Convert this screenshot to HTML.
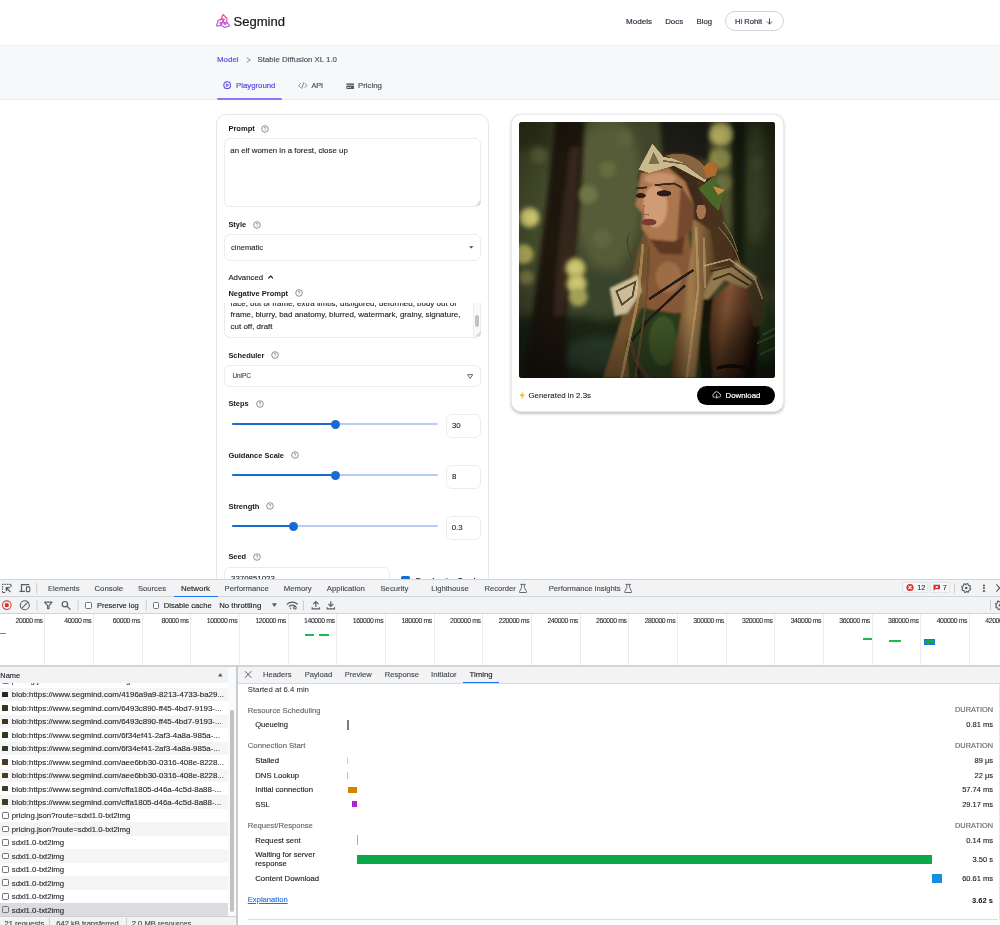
<!DOCTYPE html>
<html lang="en">
<head>
<meta charset="utf-8">
<title>Stable Diffusion XL 1.0 - Segmind</title>
<style>
*{box-sizing:border-box;margin:0;padding:0}
html,body{width:1000px;height:925px;overflow:hidden;background:#fff}
body{font-family:"Liberation Sans",sans-serif;color:#111;position:relative}
.abs{position:absolute}
.t{position:absolute;white-space:nowrap;line-height:1}
.box{position:absolute;border:1px solid #ececef;border-radius:6px;background:#fff}
#site{will-change:transform;position:absolute;left:0;top:0;width:1000px;height:579px;overflow:hidden;background:#fff}
#dt{will-change:transform;position:absolute;left:0;top:0;width:1000px;height:925px;overflow:hidden}

</style>
</head>
<body>
<div id="site">
<div class="abs" style="left:0.00px;top:45.00px;width:1000.00px;height:1.00px;background:#eceef1;"></div>
<div class="abs" style="left:0.00px;top:46.00px;width:1000.00px;height:53.50px;background:#f7f8fa;"></div>
<div class="abs" style="left:0.00px;top:99.00px;width:1000.00px;height:1.00px;background:#e9ebef;"></div>
<svg class="abs" style="left:216.3px;top:14px" width="14.2" height="13.8" viewBox="-333 -381 666 645" preserveAspectRatio="none">
<defs><linearGradient id="lg" gradientUnits="userSpaceOnUse" x1="20" y1="-360" x2="-40" y2="230"><stop offset="0" stop-color="#ff5273"/><stop offset="0.5" stop-color="#d656bd"/><stop offset="1" stop-color="#a467f2"/></linearGradient></defs>
<g fill="none" stroke="url(#lg)" stroke-width="58" stroke-linejoin="round" stroke-linecap="round">
<path d="M0 -358L180 -170L170 -40L90 62L0 -40L55 -140L-85 -168Z"/>
<path d="M310 179L57 241L-50 167L-99 47L35 20L94 118L188 10Z"/>
<path d="M-310 179L-237 -71L-120 -127L9 -109L-35 20L-149 22L-103 158Z"/>
</g></svg>
<span class="t" style="top:15.00px;font-size:13.05px;color:#15171c;left:233.50px;-webkit-text-stroke:0.2px #15171c;">Segmind</span>
<span class="t" style="top:18.00px;font-size:8.05px;color:#2a3140;left:626.00px;-webkit-text-stroke:0.18px #2a3140;">Models</span>
<span class="t" style="top:18.00px;font-size:7.85px;color:#2a3140;left:665.20px;-webkit-text-stroke:0.18px #2a3140;">Docs</span>
<span class="t" style="top:18.00px;font-size:7.75px;color:#2a3140;left:696.60px;-webkit-text-stroke:0.18px #2a3140;">Blog</span>
<div class="abs" style="left:725px;top:11.2px;width:58.6px;height:20px;border:0.8px solid #cfd3da;border-radius:10px;background:#fff"></div>
<span class="t" style="top:18.00px;font-size:7.6px;color:#2a3140;left:735.00px;-webkit-text-stroke:0.18px #2a3140;">Hi Rohit</span>
<svg class="abs" style="left:765.5px;top:17.5px" width="7" height="7" viewBox="0 0 14 14"><path d="M7 1.5V12M2.5 7.5L7 12l4.5-4.5" fill="none" stroke="#2a3140" stroke-width="1.7" stroke-linecap="round" stroke-linejoin="round"/></svg>
<span class="t" style="top:56.00px;font-size:7.95px;color:#5a4ee6;left:217.00px;-webkit-text-stroke:0.18px #5a4ee6;">Model</span>
<svg class="abs" style="left:246px;top:56.5px" width="5" height="6" viewBox="0 0 5 6"><path d="M0.7 0.7L4.2 3L0.7 5.3" fill="none" stroke="#6b7280" stroke-width="0.8"/></svg>
<span class="t" style="top:56.00px;font-size:7.85px;color:#454b58;left:257.60px;-webkit-text-stroke:0.12px #454b58;">Stable Diffusion XL 1.0</span>
<svg class="abs" style="left:222.8px;top:81.2px" width="8.4" height="8.4" viewBox="0 0 16 16"><circle cx="8" cy="8" r="6.4" fill="none" stroke="#5a4ee6" stroke-width="2"/><path d="M6.4 5.2L11 8L6.4 10.8Z" fill="none" stroke="#5a4ee6" stroke-width="1.7" stroke-linejoin="round"/></svg>
<span class="t" style="top:82.00px;font-size:7.8px;color:#5a4ee6;left:236.00px;-webkit-text-stroke:0.2px #5a4ee6;">Playground</span>
<svg class="abs" style="left:298px;top:82px" width="9.6" height="7" viewBox="0 0 19 14"><path d="M5 3L1.3 7L5 11M14 3l3.7 4L14 11M11.3 1.2L7.7 12.8" fill="none" stroke="#555b66" stroke-width="1.4" stroke-linecap="round" stroke-linejoin="round"/></svg>
<span class="t" style="top:82.00px;font-size:7.3px;color:#4a505c;left:311.40px;-webkit-text-stroke:0.18px #4a505c;">API</span>
<svg class="abs" style="left:345.5px;top:82.5px" width="8.6" height="6.4" viewBox="0 0 17 13"><rect x="0.5" y="0.8" width="16" height="3" fill="#555b66"/><rect x="0.5" y="5.2" width="16" height="7" rx="1" fill="#555b66"/><rect x="2.5" y="8.6" width="4" height="1.6" fill="#fff"/><rect x="8" y="8.6" width="2" height="1.6" fill="#fff"/></svg>
<span class="t" style="top:82.00px;font-size:7.85px;color:#4a505c;left:358.00px;-webkit-text-stroke:0.18px #4a505c;">Pricing</span>
<div class="abs" style="left:216.60px;top:97.50px;width:65.00px;height:2.20px;background:#847bf3;border-radius:1px"></div>
<div class="abs" style="left:216.3px;top:114px;width:273px;height:520px;border:1px solid #e6e7ea;border-radius:10px;background:#fff"></div>
<span class="t" style="top:125.00px;font-size:7.55px;color:#15171b;left:228.40px;font-weight:bold;">Prompt</span>
<svg class="abs" style="left:260.70px;top:124.80px" width="8" height="8" viewBox="0 0 8 8"><circle cx="4" cy="4" r="3.3" fill="none" stroke="#696d75" stroke-width="0.75"/><text x="4" y="5.7" font-size="4.6" text-anchor="middle" fill="#696d75" font-family="Liberation Sans, sans-serif">?</text></svg>
<div class="box" style="left:224.3px;top:138.4px;width:257px;height:68.4px"></div>
<span class="t" style="top:147.00px;font-size:7.9px;color:#1d1f24;left:230.25px;-webkit-text-stroke:0.12px #1d1f24;">an elf women in a forest, close up</span>
<svg class="abs" style="left:474.5px;top:200.3px" width="6" height="6" viewBox="0 0 6 6"><path d="M5.5 1L1 5.5M5.5 3.5L3.5 5.5" stroke="#8a8d93" stroke-width="0.6" fill="none"/></svg>
<span class="t" style="top:221.00px;font-size:7.4px;color:#15171b;left:228.40px;font-weight:bold;">Style</span>
<svg class="abs" style="left:252.50px;top:220.60px" width="8" height="8" viewBox="0 0 8 8"><circle cx="4" cy="4" r="3.3" fill="none" stroke="#696d75" stroke-width="0.75"/><text x="4" y="5.7" font-size="4.6" text-anchor="middle" fill="#696d75" font-family="Liberation Sans, sans-serif">?</text></svg>
<div class="box" style="left:224.3px;top:234.2px;width:257px;height:26.4px"></div>
<span class="t" style="top:244.00px;font-size:7.6px;color:#26282d;left:231.00px;-webkit-text-stroke:0.12px #26282d;">cinematic</span>
<svg class="abs" style="left:469px;top:246.2px" width="4.6" height="2.8" viewBox="0 0 46 28"><path d="M2 2H44L23 26Z" fill="#3c3f45"/></svg>
<span class="t" style="top:274.00px;font-size:7.8px;color:#1d1f24;left:228.40px;-webkit-text-stroke:0.12px #1d1f24;">Advanced</span>
<svg class="abs" style="left:267.6px;top:275px" width="5.4" height="4" viewBox="0 0 54 40"><path d="M6 32L27 10L48 32" fill="none" stroke="#1d1f24" stroke-width="11" stroke-linecap="round" stroke-linejoin="round"/></svg>
<span class="t" style="top:290.00px;font-size:7.5px;color:#15171b;left:228.40px;font-weight:bold;">Negative Prompt</span>
<svg class="abs" style="left:295.00px;top:288.60px" width="8" height="8" viewBox="0 0 8 8"><circle cx="4" cy="4" r="3.3" fill="none" stroke="#696d75" stroke-width="0.75"/><text x="4" y="5.7" font-size="4.6" text-anchor="middle" fill="#696d75" font-family="Liberation Sans, sans-serif">?</text></svg>
<div class="abs" style="left:224.3px;top:303px;width:257px;height:34.6px;overflow:hidden;border:1px solid #e9eaed;border-top:none;border-radius:0 0 6px 6px;background:#fff">
<div class="abs" style="left:247.3px;top:0;width:8.7px;height:34px;background:#fafafa;border-left:0.6px solid #ececec"></div>
<div class="abs" style="left:249.3px;top:11.8px;width:4.4px;height:12.4px;background:#c2c2c2;border-radius:2.2px"></div>
</div>
<div class="abs" style="left:224.3px;top:303px;width:248px;height:34px;overflow:hidden">
<span class="t" style="left:6.3px;top:-3.00px;font-size:7.98px;color:#1d1f24;-webkit-text-stroke:0.12px #1d1f24">face, out of frame, extra limbs, disfigured, deformed, body out of</span>
<span class="t" style="left:6.3px;top:8.00px;font-size:7.98px;color:#1d1f24;-webkit-text-stroke:0.12px #1d1f24">frame, blurry, bad anatomy, blurred, watermark, grainy, signature,</span>
<span class="t" style="left:6.3px;top:20.00px;font-size:7.98px;color:#1d1f24;-webkit-text-stroke:0.12px #1d1f24">cut off, draft</span>
</div>
<svg class="abs" style="left:474.5px;top:331.2px" width="6" height="6" viewBox="0 0 6 6"><path d="M5.5 1L1 5.5M5.5 3.5L3.5 5.5" stroke="#8a8d93" stroke-width="0.6" fill="none"/></svg>
<span class="t" style="top:352.00px;font-size:7.45px;color:#15171b;left:228.40px;font-weight:bold;">Scheduler</span>
<svg class="abs" style="left:271.00px;top:351.20px" width="8" height="8" viewBox="0 0 8 8"><circle cx="4" cy="4" r="3.3" fill="none" stroke="#696d75" stroke-width="0.75"/><text x="4" y="5.7" font-size="4.6" text-anchor="middle" fill="#696d75" font-family="Liberation Sans, sans-serif">?</text></svg>
<div class="box" style="left:224.3px;top:365.3px;width:257px;height:21.4px"></div>
<span class="t" style="top:373.00px;font-size:6.45px;color:#3c4660;left:232.40px;-webkit-text-stroke:0.12px #3c4660;">UniPC</span>
<svg class="abs" style="left:467px;top:373.6px" width="6.4" height="5" viewBox="0 0 64 50"><path d="M6 6H58L32 44Z" fill="none" stroke="#3c4660" stroke-width="8" stroke-linejoin="round"/></svg>
<span class="t" style="top:400.00px;font-size:7.45px;color:#15171b;left:228.40px;font-weight:bold;">Steps</span>
<svg class="abs" style="left:255.50px;top:400.30px" width="8" height="8" viewBox="0 0 8 8"><circle cx="4" cy="4" r="3.3" fill="none" stroke="#696d75" stroke-width="0.75"/><text x="4" y="5.7" font-size="4.6" text-anchor="middle" fill="#696d75" font-family="Liberation Sans, sans-serif">?</text></svg>
<div class="abs" style="left:232.00px;top:423.40px;width:206.00px;height:2.00px;background:#b5cff2;border-radius:1px"></div>
<div class="abs" style="left:232.00px;top:423.40px;width:103.40px;height:2.00px;background:#1a6ad4;border-radius:1px"></div>
<div class="abs" style="left:330.70px;top:419.70px;width:9.4px;height:9.4px;border-radius:50%;background:#1a6ad4"></div>
<div class="box" style="left:445.6px;top:414.20px;width:35.6px;height:23.4px;border-radius:6px"></div>
<span class="t" style="top:422.00px;font-size:7.75px;color:#1d1f24;left:452.00px;-webkit-text-stroke:0.12px #1d1f24;">30</span>
<span class="t" style="top:452.00px;font-size:7.47px;color:#15171b;left:228.40px;font-weight:bold;">Guidance Scale</span>
<svg class="abs" style="left:290.50px;top:451.30px" width="8" height="8" viewBox="0 0 8 8"><circle cx="4" cy="4" r="3.3" fill="none" stroke="#696d75" stroke-width="0.75"/><text x="4" y="5.7" font-size="4.6" text-anchor="middle" fill="#696d75" font-family="Liberation Sans, sans-serif">?</text></svg>
<div class="abs" style="left:232.00px;top:474.40px;width:206.00px;height:2.00px;background:#b5cff2;border-radius:1px"></div>
<div class="abs" style="left:232.00px;top:474.40px;width:103.40px;height:2.00px;background:#1a6ad4;border-radius:1px"></div>
<div class="abs" style="left:330.70px;top:470.70px;width:9.4px;height:9.4px;border-radius:50%;background:#1a6ad4"></div>
<div class="box" style="left:445.6px;top:465.20px;width:35.6px;height:23.4px;border-radius:6px"></div>
<span class="t" style="top:473.00px;font-size:7.75px;color:#1d1f24;left:452.00px;-webkit-text-stroke:0.12px #1d1f24;">8</span>
<span class="t" style="top:503.00px;font-size:7.54px;color:#15171b;left:228.40px;font-weight:bold;">Strength</span>
<svg class="abs" style="left:266.00px;top:502.30px" width="8" height="8" viewBox="0 0 8 8"><circle cx="4" cy="4" r="3.3" fill="none" stroke="#696d75" stroke-width="0.75"/><text x="4" y="5.7" font-size="4.6" text-anchor="middle" fill="#696d75" font-family="Liberation Sans, sans-serif">?</text></svg>
<div class="abs" style="left:232.00px;top:525.40px;width:206.00px;height:2.00px;background:#b5cff2;border-radius:1px"></div>
<div class="abs" style="left:232.00px;top:525.40px;width:61.60px;height:2.00px;background:#1a6ad4;border-radius:1px"></div>
<div class="abs" style="left:288.90px;top:521.70px;width:9.4px;height:9.4px;border-radius:50%;background:#1a6ad4"></div>
<div class="box" style="left:445.6px;top:516.20px;width:35.6px;height:23.4px;border-radius:6px"></div>
<span class="t" style="top:524.00px;font-size:7.75px;color:#1d1f24;left:451.70px;-webkit-text-stroke:0.12px #1d1f24;">0.3</span>
<span class="t" style="top:553.00px;font-size:7.4px;color:#15171b;left:228.40px;font-weight:bold;">Seed</span>
<svg class="abs" style="left:252.50px;top:553.30px" width="8" height="8" viewBox="0 0 8 8"><circle cx="4" cy="4" r="3.3" fill="none" stroke="#696d75" stroke-width="0.75"/><text x="4" y="5.7" font-size="4.6" text-anchor="middle" fill="#696d75" font-family="Liberation Sans, sans-serif">?</text></svg>
<div class="box" style="left:224.3px;top:567.2px;width:165.3px;height:26px"></div>
<span class="t" style="top:575.00px;font-size:7.9px;color:#1d1f24;left:231.00px;-webkit-text-stroke:0.12px #1d1f24;">3370851023</span>
<div class="abs" style="left:401.4px;top:576px;width:8.6px;height:8.6px;border-radius:1.5px;background:#1a6ad4"></div>
<span class="t" style="top:577.00px;font-size:7.5px;color:#15171b;left:415.70px;font-weight:bold;">Randomize Seed</span>
<div class="abs" style="left:511px;top:114.3px;width:272.5px;height:297.5px;border:1px solid #ececef;border-radius:10px;background:#fff;box-shadow:0 1.5px 3px rgba(0,0,0,0.22),0 0 1px rgba(0,0,0,0.1)"></div>
<svg class="abs" style="left:519px;top:122px;border-radius:3px" width="256" height="256" viewBox="0 0 925 925">
<defs>
<filter id="b1" x="-20%" y="-20%" width="140%" height="140%"><feGaussianBlur stdDeviation="18"/></filter>
<filter id="b2" x="-20%" y="-20%" width="140%" height="140%"><feGaussianBlur stdDeviation="7"/></filter>
<filter id="b3" x="-20%" y="-20%" width="140%" height="140%"><feGaussianBlur stdDeviation="3.5"/></filter>
<filter id="b4" x="-20%" y="-20%" width="140%" height="140%"><feGaussianBlur stdDeviation="2.2"/></filter>
<radialGradient id="vig" cx="0.45" cy="0.42" r="0.78"><stop offset="0.5" stop-color="#000" stop-opacity="0"/><stop offset="1" stop-color="#000" stop-opacity="0.6"/></radialGradient>
<radialGradient id="bk" cx="0.5" cy="0.5" r="0.5"><stop offset="0" stop-color="#d6cf78"/><stop offset="0.7" stop-color="#c2bb68"/><stop offset="1" stop-color="#8f8c4a"/></radialGradient>
<linearGradient id="hairR" x1="0" y1="0" x2="1" y2="0"><stop offset="0" stop-color="#4a321c"/><stop offset="0.45" stop-color="#a27c4c"/><stop offset="1" stop-color="#553a22"/></linearGradient>
<linearGradient id="arm" x1="0" y1="0" x2="1" y2="0.3"><stop offset="0" stop-color="#452814"/><stop offset="0.4" stop-color="#8c5b38"/><stop offset="0.8" stop-color="#5a3620"/><stop offset="1" stop-color="#28160b"/></linearGradient>
<linearGradient id="armv" x1="0" y1="0" x2="0" y2="1"><stop offset="0.3" stop-color="#000" stop-opacity="0"/><stop offset="1" stop-color="#000" stop-opacity="0.45"/></linearGradient>
</defs>
<rect width="925" height="925" fill="#41462b"/>
<g filter="url(#b1)">
<ellipse cx="320" cy="250" rx="125" ry="290" fill="#575c39"/>
<ellipse cx="50" cy="300" rx="70" ry="320" fill="#42482c"/>
<ellipse cx="725" cy="200" rx="60" ry="240" fill="#50552f"/>
<rect x="780" y="-40" width="180" height="640" fill="#2b321d"/>
<ellipse cx="858" cy="220" rx="36" ry="220" fill="#41482c"/>
<rect x="-40" y="700" width="1000" height="280" fill="#1b2819"/>
<ellipse cx="300" cy="620" rx="110" ry="90" fill="#38452b"/>
<ellipse cx="290" cy="840" rx="130" ry="60" fill="#2a3e2a"/>
<ellipse cx="890" cy="760" rx="45" ry="110" fill="#26401f"/>
<rect x="-30" y="-30" width="150" height="130" fill="#30371f"/>
<ellipse cx="720" cy="470" rx="60" ry="90" fill="#2a3320"/>
</g>
<g filter="url(#b2)">
<path d="M132 -10H236L224 250L198 520L172 700L168 935H24L56 640L100 300Z" fill="#1c1710"/>
<path d="M184 90L220 90L198 480L162 700L124 700L146 420Z" fill="#35261a"/>
<path d="M508 -10H692L686 140L520 124Z" fill="#1d1b13"/>
<path d="M768 -10H816L812 540H776Z" fill="#151a10"/>
</g>
<g filter="url(#b2)">
<circle cx="730" cy="44" r="44" fill="url(#bk)"/>
<circle cx="726" cy="132" r="38" fill="#8f8d4b"/>
<circle cx="738" cy="220" r="30" fill="#6a6d3f"/>
<circle cx="38" cy="345" r="38" fill="url(#bk)"/>
<circle cx="16" cy="478" r="36" fill="#a8a455"/>
<circle cx="26" cy="562" r="26" fill="#74763f"/>
<circle cx="204" cy="528" r="38" fill="url(#bk)"/>
<circle cx="208" cy="585" r="38" fill="url(#bk)"/>
<circle cx="214" cy="632" r="34" fill="#a5a058"/>
<circle cx="250" cy="262" r="34" fill="#6f7445"/>
<circle cx="320" cy="170" r="30" fill="#666c41"/>
<circle cx="300" cy="420" r="34" fill="#5f663d"/>
<circle cx="70" cy="120" r="30" fill="#575d38"/>
<circle cx="380" cy="60" r="30" fill="#5c623b"/>
<circle cx="860" cy="150" r="24" fill="#4a5132"/>
<circle cx="880" cy="330" r="22" fill="#3c452a"/>
</g>
<g filter="url(#b3)">
<!-- back hair -->
<path d="M428 205C440 140 520 100 600 112C680 128 722 220 732 330C742 420 800 470 800 520L720 540L690 700L660 925H545L560 700L600 520L640 380Z" fill="#3e2a18"/>
<path d="M302 925C350 780 400 620 428 470L450 400L490 430L480 560L450 700L420 925Z" fill="#73522e"/>
<!-- armor left -->
<path d="M328 600L430 552L442 612L392 690L346 702Z" fill="#cabd97"/>
<!-- neck & chest -->
<path d="M468 415L610 395L640 560L650 690L470 690L440 600L476 540Z" fill="#865838"/>
<path d="M470 420L600 400L590 480L510 476Z" fill="#5e3822"/>
<ellipse cx="540" cy="560" rx="46" ry="56" fill="#a8764e" opacity="0.7"/>
<!-- face -->
<path d="M440 185L540 165L600 215L632 300L628 390L560 432L472 424L442 384L447 332L420 302L432 240Z" fill="#ac7650"/>
<ellipse cx="492" cy="305" rx="44" ry="76" fill="#d9a67e" opacity="0.8"/>
<ellipse cx="510" cy="205" rx="56" ry="22" fill="#cf9d75" opacity="0.75"/>
<path d="M585 230L632 300L628 392L570 425Z" fill="#6e442a" opacity="0.9"/>
<!-- dress -->
<path d="M440 672L560 690L690 688L712 925H398L388 800Z" fill="#2a3a1a"/>
<ellipse cx="520" cy="790" rx="50" ry="90" fill="#3b5125"/>
<path d="M640 700L700 690L712 925H660Z" fill="#161e10"/>
<!-- right armor + arm -->
<path d="M700 640L770 575L848 615L868 760L852 925H700L688 770Z" fill="url(#arm)"/>
<path d="M700 640L770 575L848 615L868 760L852 925H700L688 770Z" fill="url(#armv)"/>
<path d="M655 505L760 480L862 560L892 640L882 730L850 740L822 602L742 572L684 640L640 712L648 560Z" fill="#93794f"/>
<path d="M822 602L862 560L892 640L882 730L850 740Z" fill="#4a3a24"/>
<path d="M640 640L700 640L690 720L650 720Z" fill="#17120d"/>
<path d="M640 210C700 230 740 300 745 380C760 440 790 480 780 520L700 530L650 400Z" fill="#4a331e"/>
<!-- front hair right -->
<path d="M630 350L690 390L712 520L668 620L638 925H545L596 640L622 470Z" fill="url(#hairR)"/>
</g>
<g filter="url(#b4)">
<ellipse cx="658" cy="322" rx="17" ry="30" fill="#a87350"/>
<!-- tiara -->
<path d="M432 172L482 78L522 126L602 140L684 192L672 218L560 158L470 184Z" fill="#c9b98d"/>
<path d="M468 152L486 108L508 150Z" fill="#5c4c30" opacity="0.7"/>
<path d="M520 140L600 152L672 205" stroke="#5c4a2c" stroke-width="6" fill="none" opacity="0.8"/>
<!-- hair top -->
<path d="M530 122C600 100 660 130 692 190L676 208L600 150Z" fill="#86653f"/>
<path d="M560 170L640 210L668 300L640 300L610 220Z" fill="#3d2a1a"/>
<!-- flower / leaves -->
<path d="M664 165L690 142L718 150L712 192L680 204Z" fill="#b06c2e"/>
<path d="M648 240L700 200L742 250L722 322L690 290Z" fill="#48682a"/>
<path d="M700 232L745 245L720 264Z" fill="#c88a40"/>
<!-- eyes brows lips -->
<ellipse cx="440" cy="266" rx="18" ry="9" fill="#2b1d15"/>
<ellipse cx="524" cy="258" rx="26" ry="11" fill="#2b1d15"/>
<path d="M424 240L462 236M490 228L560 222L590 238" stroke="#3a281a" stroke-width="7" fill="none"/>
<ellipse cx="470" cy="362" rx="27" ry="12" fill="#7c3b31"/>
<path d="M452 300L446 332L470 336" stroke="#8a5a3c" stroke-width="5" fill="none" opacity="0.7"/>
<!-- straps -->
<path d="M630 535L470 640M600 590L440 740M480 700L400 800L440 925" stroke="#231a12" stroke-width="9" fill="none"/>
<path d="M400 790L420 860L470 925" stroke="#4a3826" stroke-width="14" fill="none"/>
<!-- armor patterns -->
<path d="M352 612L420 578L410 630L372 660Z" fill="none" stroke="#5a4a30" stroke-width="7"/>
<path d="M690 540L770 520L850 580M700 570L760 548L830 590" stroke="#3f301d" stroke-width="7" fill="none"/>
<path d="M668 520L760 496L850 560L880 640" stroke="#cdb98a" stroke-width="6" fill="none" opacity="0.7"/>
<!-- hair strands -->
<path d="M640 380L648 600L606 925M668 420L672 600" stroke="#c9a672" stroke-width="9" fill="none" opacity="0.55"/>
<path d="M448 440L430 640L370 925" stroke="#b8945e" stroke-width="10" fill="none" opacity="0.7"/>
<path d="M470 450L460 640L420 925" stroke="#6a4a2a" stroke-width="8" fill="none" opacity="0.7"/>
<path d="M720 380C760 420 790 470 800 520M735 360C770 400 780 440 790 470" stroke="#94744c" stroke-width="4" fill="none" opacity="0.8"/>
<path d="M400 400C380 430 400 470 410 500" stroke="#4a3520" stroke-width="3" fill="none"/>
<!-- arm band -->
<path d="M715 890C760 874 820 880 855 912" stroke="#130f0b" stroke-width="12" fill="none"/>
<!-- fern right -->
<path d="M860 800L925 770M870 840L925 815M880 770L925 745" stroke="#456b34" stroke-width="7" fill="none"/>
</g>
<rect width="925" height="925" fill="url(#vig)"/>
</svg>
<svg class="abs" style="left:519.3px;top:390.5px" width="6.5" height="9" viewBox="0 0 13 18"><path d="M8.5 0.5L1 10h4.6L4 17.5L12 7.2H7.2Z" fill="#f5b73a"/></svg>
<span class="t" style="top:392.00px;font-size:7.86px;color:#1d1f24;left:528.50px;-webkit-text-stroke:0.12px #1d1f24;">Generated in 2.3s</span>
<div class="abs" style="left:697px;top:386px;width:78.4px;height:19.2px;border-radius:9.6px;background:#000"></div>
<svg class="abs" style="left:712.2px;top:391.3px" width="9.4" height="8" viewBox="0 0 19 16"><path d="M5 12.5H4.3A3.4 3.4 0 0 1 4 5.8A5.3 5.3 0 0 1 14.3 5A3.8 3.8 0 0 1 14.6 12.5H14" fill="none" stroke="#fff" stroke-width="1.5" stroke-linecap="round"/><path d="M9.5 7.5V14M7 11.8L9.5 14.3L12 11.8" fill="none" stroke="#fff" stroke-width="1.5" stroke-linecap="round" stroke-linejoin="round"/></svg>
<span class="t" style="top:392.00px;font-size:7.82px;color:#fff;left:725.60px;-webkit-text-stroke:0.2px #fff;">Download</span>
</div>
<div id="dt">
<div class="abs" style="left:0.00px;top:579.00px;width:1000.00px;height:346.00px;background:#fff;"></div>
<div class="abs" style="left:0.00px;top:579.00px;width:1000.00px;height:1.00px;background:#d2d4d8;"></div>
<div class="abs" style="left:0.00px;top:580.00px;width:1000.00px;height:16.00px;background:#f1f3f4;"></div>
<div class="abs" style="left:0.00px;top:596.00px;width:1000.00px;height:1.00px;background:#d2d4d8;"></div>
<div class="abs" style="left:0.00px;top:597.00px;width:1000.00px;height:16.00px;background:#f1f3f4;"></div>
<div class="abs" style="left:0.00px;top:613.00px;width:1000.00px;height:1.00px;background:#d2d4d8;"></div>
<span class="t" style="top:585.00px;font-size:7.56px;color:#45484e;left:48.00px;-webkit-text-stroke:0.12px #45484e;">Elements</span>
<span class="t" style="top:585.00px;font-size:7.77px;color:#45484e;left:94.50px;-webkit-text-stroke:0.12px #45484e;">Console</span>
<span class="t" style="top:585.00px;font-size:7.63px;color:#45484e;left:138.00px;-webkit-text-stroke:0.12px #45484e;">Sources</span>
<span class="t" style="top:585.00px;font-size:7.91px;color:#202124;left:181.00px;-webkit-text-stroke:0.12px #202124;">Network</span>
<span class="t" style="top:585.00px;font-size:7.73px;color:#45484e;left:224.50px;-webkit-text-stroke:0.12px #45484e;">Performance</span>
<span class="t" style="top:585.00px;font-size:7.75px;color:#45484e;left:283.75px;-webkit-text-stroke:0.12px #45484e;">Memory</span>
<span class="t" style="top:585.00px;font-size:7.82px;color:#45484e;left:326.75px;-webkit-text-stroke:0.12px #45484e;">Application</span>
<span class="t" style="top:585.00px;font-size:7.68px;color:#45484e;left:380.50px;-webkit-text-stroke:0.12px #45484e;">Security</span>
<span class="t" style="top:585.00px;font-size:7.66px;color:#45484e;left:431.25px;-webkit-text-stroke:0.12px #45484e;">Lighthouse</span>
<span class="t" style="top:585.00px;font-size:7.6px;color:#45484e;left:484.50px;-webkit-text-stroke:0.12px #45484e;">Recorder</span>
<span class="t" style="top:585.00px;font-size:7.67px;color:#45484e;left:548.75px;-webkit-text-stroke:0.12px #45484e;">Performance insights</span>
<div class="abs" style="left:174.00px;top:595.50px;width:43.50px;height:1.50px;background:#1a73e8;"></div>
<div class="abs" style="left:85.2px;top:602.2px;width:6.6px;height:6.6px;border:0.8px solid #6f7378;border-radius:1.4px;background:#fff"></div>
<span class="t" style="top:602.00px;font-size:7.44px;color:#202124;left:97.00px;-webkit-text-stroke:0.12px #202124;">Preserve log</span>
<div class="abs" style="left:152.6px;top:602.2px;width:6.6px;height:6.6px;border:0.8px solid #6f7378;border-radius:1.4px;background:#fff"></div>
<span class="t" style="top:602.00px;font-size:7.64px;color:#202124;left:163.75px;-webkit-text-stroke:0.12px #202124;">Disable cache</span>
<span class="t" style="top:602.00px;font-size:7.79px;color:#202124;left:219.25px;-webkit-text-stroke:0.12px #202124;">No throttling</span>
<div class="abs" style="left:44.00px;top:614.00px;width:1.00px;height:51.00px;background:#eaecee;"></div>
<span class="t" style="top:618.00px;font-size:6.9px;color:#303236;right:957.40px;-webkit-text-stroke:0.12px #303236;letter-spacing:-0.4px;">20000 ms</span>
<div class="abs" style="left:93.00px;top:614.00px;width:1.00px;height:51.00px;background:#eaecee;"></div>
<span class="t" style="top:618.00px;font-size:6.9px;color:#303236;right:908.74px;-webkit-text-stroke:0.12px #303236;letter-spacing:-0.4px;">40000 ms</span>
<div class="abs" style="left:142.00px;top:614.00px;width:1.00px;height:51.00px;background:#eaecee;"></div>
<span class="t" style="top:618.00px;font-size:6.9px;color:#303236;right:860.08px;-webkit-text-stroke:0.12px #303236;letter-spacing:-0.4px;">60000 ms</span>
<div class="abs" style="left:190.00px;top:614.00px;width:1.00px;height:51.00px;background:#eaecee;"></div>
<span class="t" style="top:618.00px;font-size:6.9px;color:#303236;right:811.42px;-webkit-text-stroke:0.12px #303236;letter-spacing:-0.4px;">80000 ms</span>
<div class="abs" style="left:239.00px;top:614.00px;width:1.00px;height:51.00px;background:#eaecee;"></div>
<span class="t" style="top:618.00px;font-size:6.9px;color:#303236;right:762.76px;-webkit-text-stroke:0.12px #303236;letter-spacing:-0.4px;">100000 ms</span>
<div class="abs" style="left:288.00px;top:614.00px;width:1.00px;height:51.00px;background:#eaecee;"></div>
<span class="t" style="top:618.00px;font-size:6.9px;color:#303236;right:714.10px;-webkit-text-stroke:0.12px #303236;letter-spacing:-0.4px;">120000 ms</span>
<div class="abs" style="left:336.00px;top:614.00px;width:1.00px;height:51.00px;background:#eaecee;"></div>
<span class="t" style="top:618.00px;font-size:6.9px;color:#303236;right:665.44px;-webkit-text-stroke:0.12px #303236;letter-spacing:-0.4px;">140000 ms</span>
<div class="abs" style="left:385.00px;top:614.00px;width:1.00px;height:51.00px;background:#eaecee;"></div>
<span class="t" style="top:618.00px;font-size:6.9px;color:#303236;right:616.78px;-webkit-text-stroke:0.12px #303236;letter-spacing:-0.4px;">160000 ms</span>
<div class="abs" style="left:434.00px;top:614.00px;width:1.00px;height:51.00px;background:#eaecee;"></div>
<span class="t" style="top:618.00px;font-size:6.9px;color:#303236;right:568.12px;-webkit-text-stroke:0.12px #303236;letter-spacing:-0.4px;">180000 ms</span>
<div class="abs" style="left:482.00px;top:614.00px;width:1.00px;height:51.00px;background:#eaecee;"></div>
<span class="t" style="top:618.00px;font-size:6.9px;color:#303236;right:519.46px;-webkit-text-stroke:0.12px #303236;letter-spacing:-0.4px;">200000 ms</span>
<div class="abs" style="left:531.00px;top:614.00px;width:1.00px;height:51.00px;background:#eaecee;"></div>
<span class="t" style="top:618.00px;font-size:6.9px;color:#303236;right:470.80px;-webkit-text-stroke:0.12px #303236;letter-spacing:-0.4px;">220000 ms</span>
<div class="abs" style="left:580.00px;top:614.00px;width:1.00px;height:51.00px;background:#eaecee;"></div>
<span class="t" style="top:618.00px;font-size:6.9px;color:#303236;right:422.14px;-webkit-text-stroke:0.12px #303236;letter-spacing:-0.4px;">240000 ms</span>
<div class="abs" style="left:628.00px;top:614.00px;width:1.00px;height:51.00px;background:#eaecee;"></div>
<span class="t" style="top:618.00px;font-size:6.9px;color:#303236;right:373.48px;-webkit-text-stroke:0.12px #303236;letter-spacing:-0.4px;">260000 ms</span>
<div class="abs" style="left:677.00px;top:614.00px;width:1.00px;height:51.00px;background:#eaecee;"></div>
<span class="t" style="top:618.00px;font-size:6.9px;color:#303236;right:324.82px;-webkit-text-stroke:0.12px #303236;letter-spacing:-0.4px;">280000 ms</span>
<div class="abs" style="left:726.00px;top:614.00px;width:1.00px;height:51.00px;background:#eaecee;"></div>
<span class="t" style="top:618.00px;font-size:6.9px;color:#303236;right:276.16px;-webkit-text-stroke:0.12px #303236;letter-spacing:-0.4px;">300000 ms</span>
<div class="abs" style="left:774.00px;top:614.00px;width:1.00px;height:51.00px;background:#eaecee;"></div>
<span class="t" style="top:618.00px;font-size:6.9px;color:#303236;right:227.50px;-webkit-text-stroke:0.12px #303236;letter-spacing:-0.4px;">320000 ms</span>
<div class="abs" style="left:823.00px;top:614.00px;width:1.00px;height:51.00px;background:#eaecee;"></div>
<span class="t" style="top:618.00px;font-size:6.9px;color:#303236;right:178.84px;-webkit-text-stroke:0.12px #303236;letter-spacing:-0.4px;">340000 ms</span>
<div class="abs" style="left:872.00px;top:614.00px;width:1.00px;height:51.00px;background:#eaecee;"></div>
<span class="t" style="top:618.00px;font-size:6.9px;color:#303236;right:130.18px;-webkit-text-stroke:0.12px #303236;letter-spacing:-0.4px;">360000 ms</span>
<div class="abs" style="left:920.00px;top:614.00px;width:1.00px;height:51.00px;background:#eaecee;"></div>
<span class="t" style="top:618.00px;font-size:6.9px;color:#303236;right:81.52px;-webkit-text-stroke:0.12px #303236;letter-spacing:-0.4px;">380000 ms</span>
<div class="abs" style="left:969.00px;top:614.00px;width:1.00px;height:51.00px;background:#eaecee;"></div>
<span class="t" style="top:618.00px;font-size:6.9px;color:#303236;right:32.86px;-webkit-text-stroke:0.12px #303236;letter-spacing:-0.4px;">400000 ms</span>
<span class="t" style="top:618.00px;font-size:6.9px;color:#303236;right:-15.80px;-webkit-text-stroke:0.12px #303236;letter-spacing:-0.4px;">420000 ms</span>
<div class="abs" style="left:0.00px;top:632.60px;width:5.50px;height:1.50px;background:#1db954;"></div>
<div class="abs" style="left:304.50px;top:634.00px;width:9.70px;height:1.50px;background:#1db954;"></div>
<div class="abs" style="left:319.20px;top:634.00px;width:10.00px;height:1.50px;background:#1db954;"></div>
<div class="abs" style="left:862.50px;top:638.00px;width:9.20px;height:1.50px;background:#1db954;"></div>
<div class="abs" style="left:888.70px;top:640.00px;width:12.30px;height:1.50px;background:#1db954;"></div>
<div class="abs" style="left:923.7px;top:639px;width:11.8px;height:6.3px;background:#16a34a;border:1px solid #1a73e8"></div>
<div class="abs" style="left:0.00px;top:665.00px;width:1000.00px;height:1.50px;background:#d2d4d8;"></div>
<div class="abs" style="left:0.00px;top:666.50px;width:1000.00px;height:16.00px;background:#f1f3f4;"></div>
<div class="abs" style="left:0.00px;top:682.50px;width:1000.00px;height:1.00px;background:#d8dadd;"></div>
<div class="abs" style="left:227.60px;top:666.50px;width:8.60px;height:16.80px;background:#f9fafb;"></div>
<span class="t" style="top:672.00px;font-size:7.4px;color:#202124;left:0.30px;-webkit-text-stroke:0.12px #202124;">Name</span>
<div class="abs" style="left:0;top:683px;width:227.5px;height:233px;overflow:hidden">
<div class="abs" style="left:0;top:-8.65px;width:227.5px;height:13.45px;background:#fff">
<div class="abs" style="left:2px;top:3.4px;width:6.6px;height:6.6px;border:0.8px solid #6f7378;border-radius:1.3px;background:#fff"></div>
</div>
<span class="t" style="left:11.75px;top:-6.00px;font-size:7.8px;color:#26282c;-webkit-text-stroke:0.12px #26282c">pricing.json?route=sdxl1.0-txt2img</span>
<div class="abs" style="left:0;top:4.80px;width:227.5px;height:13.45px;background:#f5f5f5">
<div class="abs" style="left:2px;top:4px;width:5.5px;height:5.5px;background:#1f2a18;border-radius:0.5px"></div>
</div>
<span class="t" style="left:11.75px;top:8.00px;font-size:7.94px;color:#26282c;-webkit-text-stroke:0.12px #26282c">blob:https://www.segmind.com/4196a9a9-8213-4733-ba29...</span>
<div class="abs" style="left:0;top:18.25px;width:227.5px;height:13.45px;background:#fff">
<div class="abs" style="left:2px;top:4px;width:5.5px;height:5.5px;background:#3a3520;border-radius:0.5px"></div>
</div>
<span class="t" style="left:11.75px;top:22.00px;font-size:7.94px;color:#26282c;-webkit-text-stroke:0.12px #26282c">blob:https://www.segmind.com/6493c890-ff45-4bd7-9193-...</span>
<div class="abs" style="left:0;top:31.70px;width:227.5px;height:13.45px;background:#f5f5f5">
<div class="abs" style="left:2px;top:4px;width:5.5px;height:5.5px;background:#3a3520;border-radius:0.5px"></div>
</div>
<span class="t" style="left:11.75px;top:35.00px;font-size:7.94px;color:#26282c;-webkit-text-stroke:0.12px #26282c">blob:https://www.segmind.com/6493c890-ff45-4bd7-9193-...</span>
<div class="abs" style="left:0;top:45.15px;width:227.5px;height:13.45px;background:#fff">
<div class="abs" style="left:2px;top:4px;width:5.5px;height:5.5px;background:#2c3a22;border-radius:0.5px"></div>
</div>
<span class="t" style="left:11.75px;top:49.00px;font-size:7.94px;color:#26282c;-webkit-text-stroke:0.12px #26282c">blob:https://www.segmind.com/6f34ef41-2af3-4a8a-985a-...</span>
<div class="abs" style="left:0;top:58.60px;width:227.5px;height:13.45px;background:#f5f5f5">
<div class="abs" style="left:2px;top:4px;width:5.5px;height:5.5px;background:#2c3a22;border-radius:0.5px"></div>
</div>
<span class="t" style="left:11.75px;top:62.00px;font-size:7.94px;color:#26282c;-webkit-text-stroke:0.12px #26282c">blob:https://www.segmind.com/6f34ef41-2af3-4a8a-985a-...</span>
<div class="abs" style="left:0;top:72.05px;width:227.5px;height:13.45px;background:#fff">
<div class="abs" style="left:2px;top:4px;width:5.5px;height:5.5px;background:#4a3a22;border-radius:0.5px"></div>
</div>
<span class="t" style="left:11.75px;top:76.00px;font-size:7.94px;color:#26282c;-webkit-text-stroke:0.12px #26282c">blob:https://www.segmind.com/aee6bb30-0316-408e-8228...</span>
<div class="abs" style="left:0;top:85.50px;width:227.5px;height:13.45px;background:#f5f5f5">
<div class="abs" style="left:2px;top:4px;width:5.5px;height:5.5px;background:#4a3a22;border-radius:0.5px"></div>
</div>
<span class="t" style="left:11.75px;top:89.00px;font-size:7.94px;color:#26282c;-webkit-text-stroke:0.12px #26282c">blob:https://www.segmind.com/aee6bb30-0316-408e-8228...</span>
<div class="abs" style="left:0;top:98.95px;width:227.5px;height:13.45px;background:#fff">
<div class="abs" style="left:2px;top:4px;width:5.5px;height:5.5px;background:#34402a;border-radius:0.5px"></div>
</div>
<span class="t" style="left:11.75px;top:103.00px;font-size:7.94px;color:#26282c;-webkit-text-stroke:0.12px #26282c">blob:https://www.segmind.com/cffa1805-d46a-4c5d-8a88-...</span>
<div class="abs" style="left:0;top:112.40px;width:227.5px;height:13.45px;background:#f5f5f5">
<div class="abs" style="left:2px;top:4px;width:5.5px;height:5.5px;background:#34402a;border-radius:0.5px"></div>
</div>
<span class="t" style="left:11.75px;top:116.00px;font-size:7.94px;color:#26282c;-webkit-text-stroke:0.12px #26282c">blob:https://www.segmind.com/cffa1805-d46a-4c5d-8a88-...</span>
<div class="abs" style="left:0;top:125.85px;width:227.5px;height:13.45px;background:#fff">
<div class="abs" style="left:2px;top:3.4px;width:6.6px;height:6.6px;border:0.8px solid #6f7378;border-radius:1.3px;background:#fff"></div>
</div>
<span class="t" style="left:11.75px;top:129.00px;font-size:7.8px;color:#26282c;-webkit-text-stroke:0.12px #26282c">pricing.json?route=sdxl1.0-txt2img</span>
<div class="abs" style="left:0;top:139.30px;width:227.5px;height:13.45px;background:#f5f5f5">
<div class="abs" style="left:2px;top:3.4px;width:6.6px;height:6.6px;border:0.8px solid #6f7378;border-radius:1.3px;background:#fff"></div>
</div>
<span class="t" style="left:11.75px;top:143.00px;font-size:7.8px;color:#26282c;-webkit-text-stroke:0.12px #26282c">pricing.json?route=sdxl1.0-txt2img</span>
<div class="abs" style="left:0;top:152.75px;width:227.5px;height:13.45px;background:#fff">
<div class="abs" style="left:2px;top:3.4px;width:6.6px;height:6.6px;border:0.8px solid #6f7378;border-radius:1.3px;background:#fff"></div>
</div>
<span class="t" style="left:11.75px;top:156.00px;font-size:7.8px;color:#26282c;-webkit-text-stroke:0.12px #26282c">sdxl1.0-txt2img</span>
<div class="abs" style="left:0;top:166.20px;width:227.5px;height:13.45px;background:#f5f5f5">
<div class="abs" style="left:2px;top:3.4px;width:6.6px;height:6.6px;border:0.8px solid #6f7378;border-radius:1.3px;background:#fff"></div>
</div>
<span class="t" style="left:11.75px;top:170.00px;font-size:7.8px;color:#26282c;-webkit-text-stroke:0.12px #26282c">sdxl1.0-txt2img</span>
<div class="abs" style="left:0;top:179.65px;width:227.5px;height:13.45px;background:#fff">
<div class="abs" style="left:2px;top:3.4px;width:6.6px;height:6.6px;border:0.8px solid #6f7378;border-radius:1.3px;background:#fff"></div>
</div>
<span class="t" style="left:11.75px;top:183.00px;font-size:7.8px;color:#26282c;-webkit-text-stroke:0.12px #26282c">sdxl1.0-txt2img</span>
<div class="abs" style="left:0;top:193.10px;width:227.5px;height:13.45px;background:#f5f5f5">
<div class="abs" style="left:2px;top:3.4px;width:6.6px;height:6.6px;border:0.8px solid #6f7378;border-radius:1.3px;background:#fff"></div>
</div>
<span class="t" style="left:11.75px;top:197.00px;font-size:7.8px;color:#26282c;-webkit-text-stroke:0.12px #26282c">sdxl1.0-txt2img</span>
<div class="abs" style="left:0;top:206.55px;width:227.5px;height:13.45px;background:#fff">
<div class="abs" style="left:2px;top:3.4px;width:6.6px;height:6.6px;border:0.8px solid #6f7378;border-radius:1.3px;background:#fff"></div>
</div>
<span class="t" style="left:11.75px;top:210.00px;font-size:7.8px;color:#26282c;-webkit-text-stroke:0.12px #26282c">sdxl1.0-txt2img</span>
<div class="abs" style="left:0;top:220.00px;width:227.5px;height:13.45px;background:#dadce0">
<div class="abs" style="left:2px;top:3.4px;width:6.6px;height:6.6px;border:0.8px solid #6f7378;border-radius:1.3px;background:#dadce0"></div>
</div>
<span class="t" style="left:11.75px;top:224.00px;font-size:7.8px;color:#26282c;-webkit-text-stroke:0.12px #26282c">sdxl1.0-txt2img</span>
</div>
<div class="abs" style="left:227.60px;top:683.30px;width:8.60px;height:232.50px;background:#f9fafb;"></div>
<div class="abs" style="left:230.00px;top:710.00px;width:4.30px;height:201.50px;background:#c1c1c1;border-radius:2.2px"></div>
<div class="abs" style="left:0.00px;top:915.80px;width:236.50px;height:9.20px;background:#f1f3f4;border-top:0.8px solid #cdcfd3"></div>
<span class="t" style="top:920.00px;font-size:7.6px;color:#3c4043;left:4.50px;-webkit-text-stroke:0.12px #3c4043;">21 requests</span>
<div class="abs" style="left:49.30px;top:917.50px;width:0.80px;height:8.00px;background:#c9cbcf;"></div>
<span class="t" style="top:920.00px;font-size:7.6px;color:#3c4043;left:56.25px;-webkit-text-stroke:0.12px #3c4043;">642 kB transferred</span>
<div class="abs" style="left:125.60px;top:917.50px;width:0.80px;height:8.00px;background:#c9cbcf;"></div>
<span class="t" style="top:920.00px;font-size:7.6px;color:#3c4043;left:131.75px;-webkit-text-stroke:0.12px #3c4043;">2.0 MB resources</span>
<div class="abs" style="left:236.00px;top:665.00px;width:1.50px;height:260.00px;background:#caccd0;"></div>
<span class="t" style="top:671.00px;font-size:7.54px;color:#45484e;left:263.00px;-webkit-text-stroke:0.12px #45484e;">Headers</span>
<span class="t" style="top:671.00px;font-size:7.61px;color:#45484e;left:304.75px;-webkit-text-stroke:0.12px #45484e;">Payload</span>
<span class="t" style="top:671.00px;font-size:7.59px;color:#45484e;left:344.75px;-webkit-text-stroke:0.12px #45484e;">Preview</span>
<span class="t" style="top:671.00px;font-size:7.61px;color:#45484e;left:384.75px;-webkit-text-stroke:0.12px #45484e;">Response</span>
<span class="t" style="top:671.00px;font-size:7.85px;color:#45484e;left:431.00px;-webkit-text-stroke:0.12px #45484e;">Initiator</span>
<span class="t" style="top:671.00px;font-size:7.76px;color:#202124;left:469.60px;-webkit-text-stroke:0.12px #202124;">Timing</span>
<div class="abs" style="left:463.30px;top:681.60px;width:36.00px;height:1.60px;background:#1a73e8;"></div>
<div class="abs" style="left:238px;top:687px;width:762px;height:20px;overflow:hidden">
<span class="t" style="left:9.75px;top:-1.00px;font-size:7.76px;color:#202124">Started at 6.4 min</span>
</div>
<span class="t" style="top:707.00px;font-size:7.65px;color:#5f6368;left:247.75px;-webkit-text-stroke:0.12px #5f6368;">Resource Scheduling</span>
<span class="t" style="top:721.00px;font-size:7.55px;color:#202124;left:255.25px;-webkit-text-stroke:0.12px #202124;">Queueing</span>
<span class="t" style="top:742.00px;font-size:7.75px;color:#5f6368;left:247.75px;-webkit-text-stroke:0.12px #5f6368;">Connection Start</span>
<span class="t" style="top:757.00px;font-size:7.77px;color:#202124;left:255.25px;-webkit-text-stroke:0.12px #202124;">Stalled</span>
<span class="t" style="top:772.00px;font-size:7.72px;color:#202124;left:255.25px;-webkit-text-stroke:0.12px #202124;">DNS Lookup</span>
<span class="t" style="top:786.00px;font-size:7.75px;color:#202124;left:255.25px;-webkit-text-stroke:0.12px #202124;">Initial connection</span>
<span class="t" style="top:801.00px;font-size:7.7px;color:#202124;left:255.25px;-webkit-text-stroke:0.12px #202124;">SSL</span>
<span class="t" style="top:822.00px;font-size:7.67px;color:#5f6368;left:247.75px;-webkit-text-stroke:0.12px #5f6368;">Request/Response</span>
<span class="t" style="top:837.00px;font-size:7.7px;color:#202124;left:255.25px;-webkit-text-stroke:0.12px #202124;">Request sent</span>
<span class="t" style="top:851.00px;font-size:7.66px;color:#202124;left:255.25px;-webkit-text-stroke:0.12px #202124;">Waiting for server</span>
<span class="t" style="top:860.00px;font-size:7.66px;color:#202124;left:255.25px;-webkit-text-stroke:0.12px #202124;">response</span>
<span class="t" style="top:875.00px;font-size:7.78px;color:#202124;left:255.25px;-webkit-text-stroke:0.12px #202124;">Content Download</span>
<span class="t" style="top:896.00px;font-size:7.65px;color:#1a73e8;left:247.75px;-webkit-text-stroke:0.12px #1a73e8;text-decoration:underline;">Explanation</span>
<div class="abs" style="left:347.25px;top:720.00px;width:1.60px;height:9.50px;background:#777a80;"></div>
<div class="abs" style="left:347.25px;top:757.00px;width:1.20px;height:6.50px;background:#cfd1d4;"></div>
<div class="abs" style="left:347.25px;top:772.00px;width:1.20px;height:6.50px;background:#8fd3cc;"></div>
<div class="abs" style="left:347.75px;top:786.50px;width:9.30px;height:6.00px;background:#d68100;"></div>
<div class="abs" style="left:352.25px;top:801.30px;width:4.80px;height:6.20px;background:#b31ed6;"></div>
<div class="abs" style="left:357.00px;top:835.20px;width:0.90px;height:9.40px;background:#9fb4b8;"></div>
<div class="abs" style="left:357.25px;top:854.50px;width:574.70px;height:9.60px;background:#0ba84a;"></div>
<div class="abs" style="left:932.00px;top:873.80px;width:10.00px;height:9.40px;background:#1290e0;"></div>
<span class="t" style="top:706.00px;font-size:7.38px;color:#5f6368;right:7.00px;-webkit-text-stroke:0.12px #5f6368;">DURATION</span>
<span class="t" style="top:742.00px;font-size:7.38px;color:#5f6368;right:7.00px;-webkit-text-stroke:0.12px #5f6368;">DURATION</span>
<span class="t" style="top:822.00px;font-size:7.38px;color:#5f6368;right:7.00px;-webkit-text-stroke:0.12px #5f6368;">DURATION</span>
<span class="t" style="top:721.00px;font-size:7.5px;color:#202124;right:7.00px;-webkit-text-stroke:0.12px #202124;">0.81 ms</span>
<span class="t" style="top:757.00px;font-size:7.5px;color:#202124;right:7.00px;-webkit-text-stroke:0.12px #202124;">89 μs</span>
<span class="t" style="top:772.00px;font-size:7.5px;color:#202124;right:7.00px;-webkit-text-stroke:0.12px #202124;">22 μs</span>
<span class="t" style="top:786.00px;font-size:7.5px;color:#202124;right:7.00px;-webkit-text-stroke:0.12px #202124;">57.74 ms</span>
<span class="t" style="top:801.00px;font-size:7.5px;color:#202124;right:7.00px;-webkit-text-stroke:0.12px #202124;">29.17 ms</span>
<span class="t" style="top:837.00px;font-size:7.5px;color:#202124;right:7.00px;-webkit-text-stroke:0.12px #202124;">0.14 ms</span>
<span class="t" style="top:856.00px;font-size:7.5px;color:#202124;right:7.00px;-webkit-text-stroke:0.12px #202124;">3.50 s</span>
<span class="t" style="top:875.00px;font-size:7.5px;color:#202124;right:7.00px;-webkit-text-stroke:0.12px #202124;">60.61 ms</span>
<span class="t" style="top:897.00px;font-size:7.55px;color:#111;right:7.00px;font-weight:bold;">3.62 s</span>
<div class="abs" style="left:247.50px;top:919.30px;width:750.00px;height:1.20px;background:#dcdee1;"></div>
<div class="abs" style="left:999.00px;top:684.00px;width:1.00px;height:236.00px;background:#e6e8eb;"></div>
<svg class="abs" style="left:0;top:578px" width="1000" height="347" viewBox="0 578 1000 347">
<g fill="none" stroke="#5a5e64" stroke-width="1.1">
<path d="M2.500 592.500V584.400H11" stroke-dasharray="1.500 1"/><path d="M11 584.400V587.200M2.500 592.500H5.200" />
<path d="M10.500 592.200L6.500 587.800M6.300 591.200V587.600H9.900" stroke-width="1.200"/>
<path d="M21.500 591V584.600H29.200" stroke-width="1.200"/><path d="M19.500 591.400H25" stroke-width="1.300"/><rect x="26.400" y="586.900" width="3.300" height="4.700" rx="0.700" stroke-width="1.100"/>
<circle cx="24.800" cy="605.200" r="4.500" stroke-width="1.100"/><path d="M21.700 608.300L27.900 602.100" stroke-width="1.100"/>
<path d="M44.600 602.100H52L49 605.600V608.600H47.600V605.600Z" stroke-width="1.100" stroke-linejoin="round"/>
<circle cx="64.900" cy="604.200" r="2.700" stroke-width="1.200"/><path d="M66.900 606.200L70.500 609.600" stroke-width="1.300"/>
<path d="M287.300 604A7.500 7.500 0 0 1 297.300 604M289.400 606.300A4.600 4.600 0 0 1 295.200 606.300" stroke-width="1.200" stroke-linecap="round"/>
<circle cx="294.900" cy="607.700" r="1.300" stroke-width="1.100"/>
<path d="M315.800 607V601.800M313.200 604.100L315.800 601.500L318.400 604.100M312.200 607.200V608.900H319.500V607.200" stroke-width="1.200"/>
<path d="M330.800 601.300V606.200M328.400 603.900L330.800 606.300L333.200 603.900M327.200 607.200V608.900H334.500V607.200" stroke-width="1.200"/>
<path d="M520.400 584.400H525.600M521.600 584.400V587.600L519.500 591.600A0.600 0.600 0 0 0 520 592.500H526A0.600 0.600 0 0 0 526.500 591.600L524.400 587.600V584.400" stroke-width="0.900" stroke-linejoin="round"/>
<path d="M625.600 584.400H630.800M626.800 584.400V587.600L624.700 591.600A0.600 0.600 0 0 0 625.200 592.500H631.200A0.600 0.600 0 0 0 631.700 591.600L629.600 587.600V584.400" stroke-width="0.900" stroke-linejoin="round"/>
<path d="M970.71 588.90L970.45 589.76L969.18 589.99L968.74 590.54L968.76 591.82L967.96 592.25L966.90 591.52L966.20 591.59L965.30 592.51L964.44 592.25L964.21 590.98L963.66 590.54L962.38 590.56L961.95 589.76L962.68 588.70L962.61 588.00L961.69 587.10L961.95 586.24L963.22 586.01L963.66 585.46L963.64 584.18L964.44 583.75L965.50 584.48L966.20 584.41L967.10 583.49L967.96 583.75L968.19 585.02L968.74 585.46L970.02 585.44L970.45 586.24L969.72 587.30L969.79 588.00Z" stroke-width="1.100" stroke-linejoin="round"/>
<path d="M1004.51 606.10L1004.25 606.96L1002.98 607.19L1002.54 607.74L1002.56 609.02L1001.76 609.45L1000.70 608.72L1000.00 608.79L999.10 609.71L998.24 609.45L998.01 608.18L997.46 607.74L996.18 607.76L995.75 606.96L996.48 605.90L996.41 605.20L995.49 604.30L995.75 603.44L997.02 603.21L997.46 602.66L997.44 601.38L998.24 600.95L999.30 601.68L1000.00 601.61L1000.90 600.69L1001.76 600.95L1001.99 602.22L1002.54 602.66L1003.82 602.64L1004.25 603.44L1003.52 604.50L1003.59 605.20Z" stroke-width="1.100" stroke-linejoin="round"/>
<path d="M996.300 584.300L1003 591.700M1003 584.300L996.300 591.700" stroke-width="1.100"/>
<path d="M245 671.200L251.300 677.800M251.300 671.200L245 677.800" stroke-width="1"/>
</g>
<g fill="#5a5e64">
<circle cx="966.200" cy="588" r="1.300"/><circle cx="1000" cy="605.200" r="1.300"/>
<circle cx="290.600" cy="608.300" r="0.800"/>
<rect x="983" y="584.500" width="1.900" height="1.900" rx="0.500"/><rect x="983" y="587.200" width="1.900" height="1.900" rx="0.500"/><rect x="983" y="590" width="1.900" height="1.900" rx="0.500"/>
<path d="M271.800 603.200H277L274.400 606.900Z"/>
<path d="M218 676.500H222.600L220.300 673Z"/>
</g>
<g fill="#cacccf">
<rect x="36.250" y="583.200" width="1" height="10.500"/><rect x="36.500" y="600.300" width="1" height="10"/><rect x="77.500" y="600.300" width="1" height="10"/><rect x="145.750" y="600.300" width="1" height="10"/><rect x="302.900" y="600.300" width="1" height="10"/><rect x="954" y="583.200" width="1" height="10"/><rect x="990" y="600.300" width="1" height="10"/>
</g>
<circle cx="6.800" cy="605.200" r="4.300" fill="none" stroke="#e0443a" stroke-width="1.100"/><rect x="4.900" y="603.300" width="3.800" height="3.800" rx="0.800" fill="#d93025"/>
<rect x="902.600" y="582.400" width="25.200" height="10.200" rx="1.500" fill="#f6f7f8" stroke="#dadce0" stroke-width="0.700"/>
<rect x="930.100" y="582.400" width="19.600" height="10.200" rx="1.500" fill="#f6f7f8" stroke="#dadce0" stroke-width="0.700"/>
<circle cx="910" cy="587.500" r="3.600" fill="#dc2f26"/><path d="M908.400 585.900L911.600 589.100M911.600 585.900L908.400 589.100" stroke="#fff" stroke-width="1.100"/>
<path d="M933.500 584.800H940V589.300H935.300L933.500 590.800Z" fill="#dc2f26"/><rect x="935.700" y="586.100" width="2.200" height="1.900" fill="#f6f7f8"/>
</svg>
<span class="t" style="top:584.00px;font-size:7.4px;color:#303134;left:917.20px;-webkit-text-stroke:0.12px #303134;">12</span>
<span class="t" style="top:584.00px;font-size:7.4px;color:#303134;left:942.80px;-webkit-text-stroke:0.12px #303134;">7</span>
</div>
</body>
</html>
